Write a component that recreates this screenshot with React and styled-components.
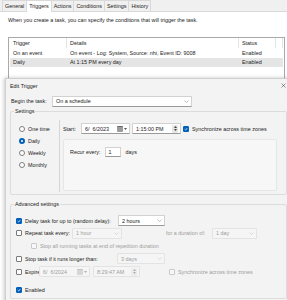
import styled, { createGlobalStyle, css } from "styled-components";

const GlobalStyle = createGlobalStyle`
  html, body {
    margin: 0;
    padding: 0;
  }
  body {
    background: #f0f0f0;
    font-family: "Liberation Sans", Arial, sans-serif;
    font-size: 5.4px;
    color: #222;
  }
  #root {
    width: 287px;
    height: 300px;
    overflow: hidden;
    position: relative;
  }
`;

const tabs = ["General", "Triggers", "Actions", "Conditions", "Settings", "History"];

const triggers = [
  { trigger: "On an event", details: "On event - Log: System, Source: nhi, Event ID: 9008", status: "Enabled" },
  { trigger: "Daily", details: "At 1:15 PM every day", status: "Enabled", selected: true },
];

function Check({ checked, disabled }) {
  return (
    <CheckBox checked={checked} disabled={disabled}>
      {checked && (
        <svg width="4" height="4" viewBox="0 0 8 8">
          <path d="M1.2 4.2 L3.2 6.1 L6.9 1.9" fill="none" stroke="#fff" strokeWidth="1.4" />
        </svg>
      )}
    </CheckBox>
  );
}

function Chevron({ disabled }) {
  return (
    <ChevronIcon width="5" height="3" viewBox="0 0 10 6">
      <path d="M1 1 L5 5 L9 1" fill="none" stroke={disabled ? "#c4c4c4" : "#8a8a8a"} strokeWidth="1.1" />
    </ChevronIcon>
  );
}

function DatePicker({ value, disabled, width }) {
  return (
    <Field disabled={disabled} width={width}>
      <FieldText>{value}</FieldText>
      <CalIcon disabled={disabled} />
      <svg width="3" height="2" viewBox="0 0 6 4">
        <path d="M0 0 L6 0 L3 4 Z" fill={disabled ? "#b0b0b0" : "#555"} />
      </svg>
    </Field>
  );
}

function TimePicker({ value, disabled, width }) {
  return (
    <Field disabled={disabled} width={width}>
      <FieldText>{value}</FieldText>
      <Spinner disabled={disabled}>
        <svg width="3" height="2" viewBox="0 0 6 4">
          <path d="M0 4 L6 4 L3 0 Z" fill={disabled ? "#b0b0b0" : "#444"} />
        </svg>
        <svg width="3" height="2" viewBox="0 0 6 4">
          <path d="M0 0 L6 0 L3 4 Z" fill={disabled ? "#b0b0b0" : "#444"} />
        </svg>
      </Spinner>
    </Field>
  );
}

function Select({ value, disabled, width }) {
  return (
    <Field disabled={disabled} width={width}>
      <FieldText>{value}</FieldText>
      <Chevron disabled={disabled} />
    </Field>
  );
}

export default function App() {
  return (
    <>
      <GlobalStyle />
      <Window>
        <TabStrip>
          {tabs.map((t) => (
            <Tab key={t} active={t === "Triggers"}>
              {t}
            </Tab>
          ))}
        </TabStrip>
        <TabPanel>
          <Intro>When you create a task, you can specify the conditions that will trigger the task.</Intro>
          <TriggerTable>
            <TableRow header>
              <Cell>Trigger</Cell>
              <Cell>Details</Cell>
              <Cell>Status</Cell>
              <Cell />
            </TableRow>
            {triggers.map((r) => (
              <TableRow key={r.trigger} selected={r.selected}>
                <Cell>{r.trigger}</Cell>
                <Cell>{r.details}</Cell>
                <Cell>{r.status}</Cell>
                <Cell />
              </TableRow>
            ))}
          </TriggerTable>
        </TabPanel>
      </Window>

      <Dialog>
        <TitleBar>
          <span>Edit Trigger</span>
          <svg width="5" height="5" viewBox="0 0 10 10">
            <path d="M1 1 L9 9 M9 1 L1 9" stroke="#333" strokeWidth="1" />
          </svg>
        </TitleBar>
        <DialogBody>
          <BeginRow>
            <BeginLabel>Begin the task:</BeginLabel>
            <Select value="On a schedule" width={140} />
          </BeginRow>

          <Group>
            <Legend>Settings</Legend>
            <SettingsGrid>
              <RadioColumn>
                {["One time", "Daily", "Weekly", "Monthly"].map((o) => (
                  <RadioRow key={o}>
                    <Radio checked={o === "Daily"} />
                    <span>{o}</span>
                  </RadioRow>
                ))}
              </RadioColumn>
              <ScheduleColumn>
                <StartRow>
                  <StartLabel>Start:</StartLabel>
                  <DatePicker value="6/  6/2023" width={49} />
                  <TimePicker value="1:15:00 PM" width={49} />
                  <CheckLabel>
                    <Check checked />
                    <span>Synchronize across time zones</span>
                  </CheckLabel>
                </StartRow>
                <RecurBox>
                  <RecurRow>
                    <span>Recur every:</span>
                    <NumberInput>1</NumberInput>
                    <span>days</span>
                  </RecurRow>
                </RecurBox>
              </ScheduleColumn>
            </SettingsGrid>
          </Group>

          <Group advanced>
            <Legend>Advanced settings</Legend>
            <AdvancedList>
              <OptionRow>
                <Check checked />
                <OptionLabel width={93}>Delay task for up to (random delay):</OptionLabel>
                <Select value="2 hours" width={47} />
              </OptionRow>
              <OptionRow>
                <Check />
                <OptionLabel width={47}>Repeat task every:</OptionLabel>
                <Select value="1 hour" width={50} disabled />
                <OptionLabel width={46} offset={44} disabled>
                  for a duration of:
                </OptionLabel>
                <Select value="1 day" width={45} disabled />
              </OptionRow>
              <OptionRow indent={15}>
                <Check disabled />
                <OptionLabel disabled>Stop all running tasks at end of repetition duration</OptionLabel>
              </OptionRow>
              <OptionRow>
                <Check />
                <OptionLabel width={92}>Stop task if it runs longer than:</OptionLabel>
                <Select value="3 days" width={48} disabled />
              </OptionRow>
              <OptionRow>
                <Check />
                <OptionLabel width={14}>Expire:</OptionLabel>
                <DatePicker value="6/  6/2024" width={51} disabled />
                <Gap w={3} />
                <TimePicker value="8:29:47 AM" width={47} disabled />
                <Gap w={29} />
                <Check disabled />
                <OptionLabel disabled>Synchronize across time zones</OptionLabel>
              </OptionRow>
              <OptionRow enabled>
                <Check checked />
                <OptionLabel>Enabled</OptionLabel>
              </OptionRow>
            </AdvancedList>
          </Group>
        </DialogBody>
      </Dialog>
    </>
  );
}

const Window = styled.div`
  width: 287px;
  height: 300px;
  display: flex;
  flex-direction: column;
`;

const TabStrip = styled.div`
  height: 12px;
  display: flex;
  align-items: flex-end;
  padding-left: 2px;
  box-sizing: border-box;
  border-bottom: 1px solid #d9d9d9;
`;

const Tab = styled.div`
  height: 10px;
  line-height: 10px;
  padding: 0 2px;
  margin-right: -1px;
  border: 1px solid #d9d9d9;
  border-bottom: none;
  background: #f0f0f0;
  white-space: nowrap;
  ${(p) =>
    p.active &&
    css`
      height: 11px;
      background: #fff;
      margin-bottom: -1px;
      position: relative;
      z-index: 1;
    `}
`;

const TabPanel = styled.div`
  flex: 1;
  background: #fff;
  padding: 0 1px 0 8px;
`;

const Intro = styled.div`
  margin-top: 5px;
  line-height: 7px;
  white-space: nowrap;
`;

const TriggerTable = styled.div`
  margin-top: 13px;
  width: 277px;
  height: 120px;
  border: 1px solid #a9a9a9;
  box-sizing: border-box;
`;

const TableRow = styled.div`
  display: grid;
  grid-template-columns: 57px 172px 37px 1fr;
  height: 9px;
  line-height: 9px;
  margin: 0 1px;
  ${(p) =>
    p.header &&
    css`
      height: 10px;
      line-height: 10px;
      margin-bottom: 1px;
    `}
  ${(p) => p.selected && css`background: #e5e5e5;`}
  & > div {
    ${(p) => p.header && css`border-right: 1px solid #e5e5e5;`}
  }
`;

const Cell = styled.div`
  padding-left: 3px;
  white-space: nowrap;
  overflow: hidden;
`;

const Dialog = styled.div`
  position: absolute;
  left: 5px;
  top: 78px;
  width: 284px;
  height: 240px;
  background: #f3f3f3;
  border: 1px solid #cfcfcf;
  box-shadow: -1px 0 4px rgba(0, 0, 0, 0.22);
`;

const TitleBar = styled.div`
  height: 13px;
  display: flex;
  align-items: center;
  justify-content: space-between;
  padding: 0 4px 0 4px;
  svg {
    display: block;
  }
`;

const DialogBody = styled.div`
  padding: 3px 3px 0 4px;
`;

const BeginRow = styled.div`
  display: flex;
  align-items: center;
  height: 12px;
`;

const BeginLabel = styled.span`
  width: 42px;
  padding-left: 1px;
  box-sizing: border-box;
`;

const Field = styled.div`
  width: ${(p) => p.width}px;
  height: 11px;
  box-sizing: border-box;
  display: flex;
  align-items: center;
  gap: 1px;
  padding: 0 2px 0 3px;
  background: #fff;
  border: 1px solid #d2d2d2;
  border-bottom-color: #9a9a9a;
  border-radius: 1px;
  flex-shrink: 0;
  ${(p) =>
    p.disabled &&
    css`
      background: #f5f5f5;
      color: #9d9d9d;
      border-color: #e3e3e3;
    `}
`;

const FieldText = styled.span`
  flex: 1;
  white-space: pre;
`;

const ChevronIcon = styled.svg`
  display: block;
`;

const CalIcon = styled.span`
  width: 6px;
  height: 6px;
  border-radius: 1px;
  background: ${(p) => (p.disabled ? "#d6d6d6" : "#9c9c9c")};
  border-top: 1px solid ${(p) => (p.disabled ? "#c2c2c2" : "#6a6a6a")};
  box-sizing: border-box;
`;

const Spinner = styled.span`
  display: flex;
  flex-direction: column;
  align-items: center;
  justify-content: center;
  gap: 1px;
  width: 6px;
  height: 8px;
  background: ${(p) => (p.disabled ? "#ececec" : "#e6e6e6")};
  border-radius: 1px;
  svg {
    display: block;
  }
`;

const CheckBox = styled.span`
  width: 6px;
  height: 6px;
  box-sizing: border-box;
  flex-shrink: 0;
  border-radius: 1px;
  display: flex;
  align-items: center;
  justify-content: center;
  border: 1px solid #7a7a7a;
  background: #fff;
  ${(p) =>
    p.checked &&
    css`
      border-color: #005fb8;
      background: #005fb8;
    `}
  ${(p) =>
    p.disabled &&
    css`
      border-color: #c9c9c9;
      background: #f7f7f7;
    `}
`;

const Group = styled.fieldset`
  margin: ${(p) => (p.advanced ? "6px" : "1px")} 0 0 0;
  padding: 0;
  border: 1px solid #dcdcdc;
  border-radius: 2px;
  min-width: 0;
  ${(p) => p.advanced && css`height: 96px;`}
`;

const Legend = styled.legend`
  margin-left: 3px;
  padding: 0 1px;
  line-height: 7px;
`;

const SettingsGrid = styled.div`
  display: grid;
  grid-template-columns: 49px 1fr;
`;

const RadioColumn = styled.div`
  margin: 5px 0 2px;
  padding: 3px 0 0 8px;
  border-right: 1px solid #d6d6d6;
  display: flex;
  flex-direction: column;
`;

const RadioRow = styled.div`
  display: flex;
  align-items: center;
  gap: 3px;
  height: 12px;
`;

const Radio = styled.span`
  width: 6px;
  height: 6px;
  border-radius: 50%;
  box-sizing: border-box;
  border: 1px solid #7f7f7f;
  background: #fff;
  ${(p) =>
    p.checked &&
    css`
      border: 2px solid #005fb8;
    `}
`;

const ScheduleColumn = styled.div`
  padding: 8px 9px 3px 3px;
`;

const StartRow = styled.div`
  display: flex;
  align-items: center;
  gap: 2px;
  height: 11px;
`;

const StartLabel = styled.span`
  width: 16px;
`;

const CheckLabel = styled.label`
  display: flex;
  align-items: center;
  gap: 3px;
  white-space: nowrap;
`;

const RecurBox = styled.div`
  margin-top: 5px;
  height: 52px;
  box-sizing: border-box;
  background: #f7f7f7;
  border: 1px solid #e6e6e6;
  border-radius: 2px;
  padding: 6px 0 0 6px;
`;

const RecurRow = styled.div`
  display: flex;
  align-items: center;
  gap: 5px;
  height: 11px;
`;

const NumberInput = styled.span`
  width: 16px;
  height: 10px;
  line-height: 9px;
  box-sizing: border-box;
  padding-left: 3px;
  background: #fff;
  border: 1px solid #d2d2d2;
  border-bottom-color: #9a9a9a;
  margin-left: -1px;
`;

const AdvancedList = styled.div`
  padding: 7px 0 0 5px;
  display: flex;
  flex-direction: column;
  gap: 1.8px;
`;

const OptionRow = styled.div`
  display: flex;
  align-items: center;
  height: 11px;
  padding-left: ${(p) => p.indent || 0}px;
  white-space: nowrap;
  ${(p) => p.enabled && css`margin-top: 6px;`}
`;

const OptionLabel = styled.span`
  margin-left: ${(p) => (p.offset ? p.offset : 3)}px;
  ${(p) => p.width && css`width: ${p.width}px;`}
  flex-shrink: 0;
  ${(p) => p.disabled && css`color: #9d9d9d;`}
`;

const Gap = styled.span`
  width: ${(p) => p.w}px;
  flex-shrink: 0;
`;
